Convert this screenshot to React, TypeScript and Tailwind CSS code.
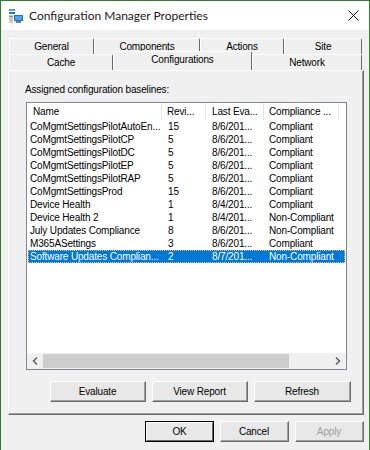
const ROWS = [
  ["CoMgmtSettingsPilotAutoEn...", "15", "8/6/201...", "Compliant"],
  ["CoMgmtSettingsPilotCP", "5", "8/6/201...", "Compliant"],
  ["CoMgmtSettingsPilotDC", "5", "8/6/201...", "Compliant"],
  ["CoMgmtSettingsPilotEP", "5", "8/6/201...", "Compliant"],
  ["CoMgmtSettingsPilotRAP", "5", "8/6/201...", "Compliant"],
  ["CoMgmtSettingsProd", "15", "8/6/201...", "Compliant"],
  ["Device Health", "1", "8/4/201...", "Compliant"],
  ["Device Health 2", "1", "8/4/201...", "Non-Compliant"],
  ["July Updates Compliance", "8", "8/6/201...", "Non-Compliant"],
  ["M365ASettings", "3", "8/6/201...", "Compliant"],
  ["Software Updates Complian...", "2", "8/7/201...", "Non-Compliant"],
];

function Tab({ label, w, selected }: { label: string; w: string; selected?: boolean }) {
  return (
    <div
      className={`${w} flex items-center justify-center border-l border-t border-r border-l-white border-t-white border-r-[#696969] bg-[#f0f0f0] rounded-t-[2px] ${
        selected ? "h-[19px] -mt-[3px] -mb-[1px] relative z-10" : "h-[16px]"
      }`}
    >
      <span className={selected ? "-mt-[3px]" : ""}>{label}</span>
    </div>
  );
}

function Btn({ label, w, def, disabled }: { label: string; w: string; def?: boolean; disabled?: boolean }) {
  return (
    <div
      className={`${w} h-[21px] flex items-center justify-center bg-[#e8e8e8] border ${
        def ? "border-black" : "border-t-white border-l-white border-r-[#696969] border-b-[#696969]"
      } ${disabled ? "text-[#a0a0a0]" : ""}`}
    >
      <div
        className={`w-full h-full flex items-center justify-center ${
          def ? "border border-t-white border-l-white border-r-[#696969] border-b-[#696969]" : "border-r border-b border-r-[#a0a0a0] border-b-[#a0a0a0]"
        }`}
      >
        {label}
      </div>
    </div>
  );
}

export default function App() {
  return (
    <div className="w-[370px] h-[450px] overflow-hidden border-t border-l border-r border-[#2f7a2f] bg-[#f0f0f0] font-['Liberation_Sans',Arial,sans-serif] text-[10px] tracking-[-0.15px] text-black">
      {/* title bar */}
      <div className="h-[29px] bg-white flex items-center pl-[7px] pr-[10px]">
        <svg width="16" height="16" viewBox="0 0 16 16" className="shrink-0">
          <rect x="1" y="1" width="6" height="2" fill="#5a9bd5" />
          <rect x="1" y="4" width="6" height="2" fill="#2e75b6" />
          <rect x="1" y="7" width="4" height="8" fill="#c8c8c8" />
          <rect x="1.5" y="8" width="3" height="1" fill="#808080" />
          <rect x="6" y="7" width="9" height="6" fill="#1f6fc5" />
          <rect x="7" y="8" width="7" height="4" fill="#4aa3f0" />
          <rect x="8" y="13" width="5" height="2" fill="#7a7a7a" />
        </svg>
        <span className="ml-[5px] text-[12px] tracking-normal font-['Lato',sans-serif] text-[#1a1a1a]">
          Configuration Manager Properties
        </span>
        <svg width="11" height="11" viewBox="0 0 11 11" className="ml-auto">
          <path d="M0.5 0.5L10.5 10.5M10.5 0.5L0.5 10.5" stroke="#111" strokeWidth="1" />
        </svg>
      </div>

      {/* tabs */}
      <div className="pt-[8px] pl-[8px]">
        <div className="flex">
          <Tab label="General" w="w-[85px]" />
          <Tab label="Components" w="w-[106px]" />
          <Tab label="Actions" w="w-[84px]" />
          <Tab label="Site" w="w-[78px]" />
        </div>
        <div className="flex">
          <Tab label="Cache" w="w-[104px]" />
          <Tab label="Configurations" w="w-[139px]" selected />
          <Tab label="Network" w="w-[110px]" />
        </div>
      </div>

      {/* panel */}
      <div className="ml-[7px] w-[356px] h-[345px] border border-t-white border-l-white border-r-[#696969] border-b-[#696969] bg-[#f0f0f0]">
        <div className="h-full border-r border-b border-r-[#a0a0a0] border-b-[#a0a0a0] pl-[16px] pt-[12px]">
          <div className="leading-[13px]">Assigned configuration baselines:</div>
          <div className="mt-[6px] ml-[1px] w-[321px] h-[268px] border border-[#828790] bg-white flex flex-col">
            {/* header */}
            <div className="flex h-[17px] items-center">
              <div className="w-[135px] h-full pl-[6px] flex items-center border-r border-[#e5e5e5]">Name</div>
              <div className="w-[44px] h-full pl-[5px] flex items-center border-r border-[#e5e5e5]">Revi...</div>
              <div className="w-[58px] h-full pl-[6px] flex items-center border-r border-[#e5e5e5]">Last Eva...</div>
              <div className="w-[75px] h-full pl-[5px] flex items-center border-r border-[#e5e5e5]">Compliance ...</div>
            </div>
            {/* rows */}
            <div className="flex-1">
              {ROWS.map((r, i) => {
                const sel = i === ROWS.length - 1;
                return (
                  <div
                    key={i}
                    className={`flex h-[13px] items-center mx-[1px] ${
                      sel ? "bg-[#0078d7] text-white outline outline-1 outline-dotted outline-[#f0c060] -outline-offset-1" : ""
                    }`}
                  >
                    <div className="w-[134px] pl-[2px] whitespace-nowrap overflow-hidden">{r[0]}</div>
                    <div className="w-[44px] pl-[6px]">{r[1]}</div>
                    <div className="w-[58px] pl-[6px]">{r[2]}</div>
                    <div className="w-[75px] pl-[5px] whitespace-nowrap">{r[3]}</div>
                  </div>
                );
              })}
            </div>
            {/* scrollbar */}
            <div className="h-[16px] flex bg-[#f0f0f0]">
              <div className="w-[16px] flex items-center justify-center">
                <svg width="6" height="8" viewBox="0 0 6 8">
                  <path d="M5 0.5L1.5 4L5 7.5" stroke="#606060" strokeWidth="1.5" fill="none" />
                </svg>
              </div>
              <div className="flex-1 flex items-stretch py-[1px]">
                <div className="w-[246px] bg-[#cdcdcd]" />
              </div>
              <div className="w-[16px] flex items-center justify-center">
                <svg width="6" height="8" viewBox="0 0 6 8">
                  <path d="M1 0.5L4.5 4L1 7.5" stroke="#606060" strokeWidth="1.5" fill="none" />
                </svg>
              </div>
            </div>
          </div>
          <div className="flex gap-[6px] mt-[11px] ml-[25px]">
            <Btn label="Evaluate" w="w-[96px]" />
            <Btn label="View Report" w="w-[96px]" />
            <Btn label="Refresh" w="w-[97px]" />
          </div>
        </div>
      </div>

      {/* footer */}
      <div className="flex gap-[6px] mt-[6px] ml-[144px]">
        <Btn label="OK" w="w-[69px]" def />
        <Btn label="Cancel" w="w-[69px]" />
        <Btn label="Apply" w="w-[69px]" disabled />
      </div>
    </div>
  );
}
